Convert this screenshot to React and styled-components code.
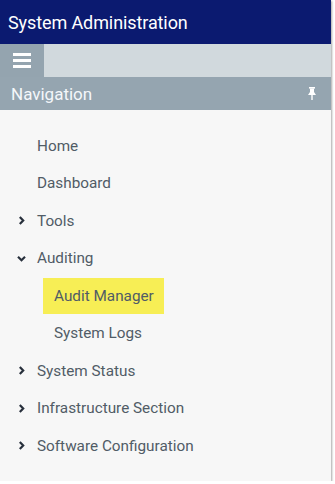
import React from 'react';
import styled, { createGlobalStyle } from 'styled-components';

const GlobalStyle = createGlobalStyle`
  html, body {
    margin: 0;
    padding: 0;
    background: #ffffff;
    font-family: Roboto, "Liberation Sans", Arial, sans-serif;
  }
`;

const Shell = styled.div`
  width: 331px;
  height: 481px;
  background: #f7f7f7;
  box-shadow: 1px 1px 2px rgba(0, 0, 0, 0.35);
  display: flex;
  flex-direction: column;
`;

const TopBar = styled.header`
  height: 44px;
  background: #0b1a70;
  color: #ffffff;
  display: flex;
  align-items: center;
  padding: 0 8px;
  font-size: 18px;
  font-weight: 400;
  letter-spacing: -0.1px;
`;

const Toolbar = styled.div`
  height: 33px;
  background: #d1d9dd;
  display: flex;
`;

const MenuButton = styled.button`
  width: 44px;
  height: 33px;
  border: 0;
  padding: 0;
  background: #94a4af;
  display: flex;
  align-items: center;
  justify-content: center;
  cursor: pointer;
`;

const PanelHeader = styled.div`
  height: 33px;
  background: #95a5b0;
  color: #f4f7fa;
  display: flex;
  align-items: center;
  justify-content: space-between;
  padding: 0 14px 0 11px;
  font-size: 17px;
`;

const NavList = styled.ul`
  list-style: none;
  margin: 0;
  padding: 17px 0 0;
`;

const NavItem = styled.li`
  height: 37.5px;
  display: flex;
  align-items: center;
  padding-left: ${(p) => (p.$sub ? 43 : 17)}px;
  font-size: 15.3px;
  color: #515c66;
`;

const Caret = styled.span`
  width: 20px;
  display: flex;
  align-items: center;
`;

const Label = styled.span`
  height: 36px;
  display: flex;
  align-items: center;
  padding: ${(p) => (p.$sub ? '0 10px 0 11px' : '0')};
  background: ${(p) => (p.$active ? '#f7ee55' : 'transparent')};
`;

const Hamburger = () => (
  <svg width="18" height="15" viewBox="0 0 18 15">
    <rect x="0" y="0" width="18" height="3" fill="#fff" />
    <rect x="0" y="6" width="18" height="3" fill="#fff" />
    <rect x="0" y="12" width="18" height="3" fill="#fff" />
  </svg>
);

const Pin = () => (
  <svg width="10" height="13" viewBox="0 0 10 13">
    <rect x="2" y="0" width="6" height="1.6" fill="#fff" />
    <rect x="3" y="1.5" width="4" height="4" fill="#fff" />
    <polygon points="1,8 3,5 7,5 9,8" fill="#fff" />
    <rect x="4.3" y="8" width="1.4" height="5" fill="#fff" />
  </svg>
);

const Chevron = ({ open }) => (
  <svg width="9" height="9" viewBox="0 0 9 9">
    <path
      d={open ? 'M1 2.8 L4.5 6.2 L8 2.8' : 'M2.8 1 L6.2 4.5 L2.8 8'}
      fill="none"
      stroke="#28303c"
      strokeWidth="2.2"
    />
  </svg>
);

const items = [
  { label: 'Home' },
  { label: 'Dashboard' },
  { label: 'Tools', caret: 'closed' },
  { label: 'Auditing', caret: 'open' },
  { label: 'Audit Manager', sub: true, active: true },
  { label: 'System Logs', sub: true },
  { label: 'System Status', caret: 'closed' },
  { label: 'Infrastructure Section', caret: 'closed' },
  { label: 'Software Configuration', caret: 'closed' },
];

export default function App() {
  return (
    <>
      <GlobalStyle />
      <Shell>
        <TopBar>System Administration</TopBar>
        <Toolbar>
          <MenuButton aria-label="Menu">
            <Hamburger />
          </MenuButton>
        </Toolbar>
        <PanelHeader>
          <span>Navigation</span>
          <Pin />
        </PanelHeader>
        <NavList>
          {items.map((item) => (
            <NavItem key={item.label} $sub={item.sub}>
              {!item.sub && (
                <Caret>{item.caret && <Chevron open={item.caret === 'open'} />}</Caret>
              )}
              <Label $sub={item.sub} $active={item.active}>
                {item.label}
              </Label>
            </NavItem>
          ))}
        </NavList>
      </Shell>
    </>
  );
}
